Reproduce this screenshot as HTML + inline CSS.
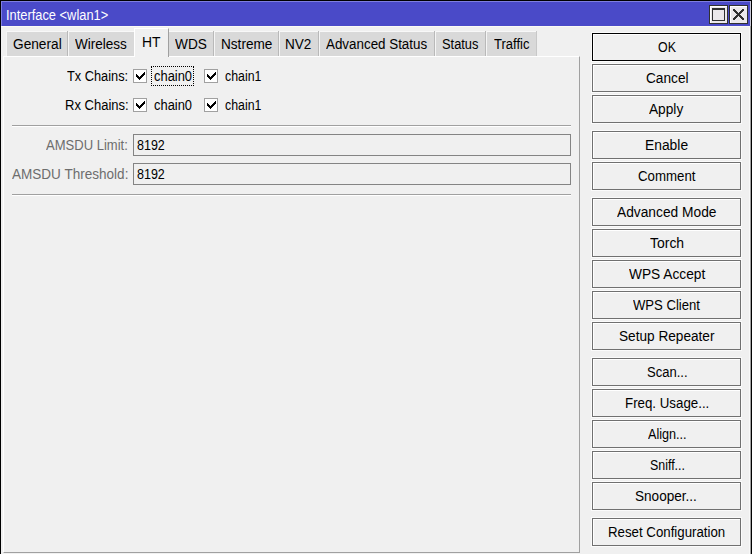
<!DOCTYPE html>
<html><head><meta charset="utf-8">
<style>
*{margin:0;padding:0;box-sizing:border-box}
html,body{width:752px;height:554px;overflow:hidden;background:#f0f0f0}
body{position:relative;font-family:"Liberation Sans",sans-serif;font-size:14px;color:#000}
.a{position:absolute}
.t{position:absolute;white-space:pre;line-height:15px;height:15px;transform-origin:0 0}
.tab{position:absolute;top:32px;height:24px;background:#d9d9d9}
.sep{position:absolute;top:31px;height:25px;width:1px;background:#b9b9b9}
.wl{position:absolute;top:31px;height:25px;width:1px;background:#f5f5f5}
.btn{position:absolute;left:592px;width:149px;height:28px;border:1px solid #707070;background:#f0f0f0;box-shadow:0 0 0 1px #fbfbfb}
.btn::before{content:"";position:absolute;left:0;top:0;right:0;bottom:0;border-left:1px solid #fff;border-top:1px solid #fff}
.def{border-color:#000}
.cb{position:absolute;width:14px;height:14px;border:1px solid #a0a0a0;background:#fff}
.fld{position:absolute;left:133px;width:438px;height:22px;border:1px solid #848484;background:#f0f0f0}
</style></head><body>
<div class="a" style="left:0;top:0;width:752px;height:1px;background:#000"></div>
<div class="a" style="left:0;top:0;width:1px;height:554px;background:#000"></div>
<div class="a" style="left:751px;top:0;width:1px;height:554px;background:#000"></div>
<div class="a" style="left:750px;top:26px;width:1px;height:528px;background:#a0a0a0"></div>
<div class="a" style="left:749px;top:27px;width:1px;height:527px;background:#f8f8f8"></div>
<div class="a" style="left:750px;top:1px;width:1px;height:25px;background:#c8c8d8"></div>
<div class="a" style="left:1px;top:1px;width:749px;height:25px;background:#4a4ac8"></div>
<div class="a" style="left:1px;top:1px;width:749px;height:1px;background:#7e7ee0"></div>
<div class="a" style="left:1px;top:1px;width:1px;height:25px;background:#7e7ee0"></div>
<div class="a" style="left:1px;top:26px;width:749px;height:1px;background:#fafaf4"></div>
<div class="a" style="left:709px;top:5px;width:19px;height:19px;background:#ebe8eb;border:1px solid #303030">
  <div class="a" style="left:0;top:0;width:17px;height:1px;background:#fff"></div>
  <div class="a" style="left:0;top:0;width:1px;height:17px;background:#fff"></div>
  <div class="a" style="left:2px;top:2px;width:13px;height:13px;border:1px solid #303030;border-top-width:2px"></div>
</div>
<div class="a" style="left:729px;top:5px;width:19px;height:19px;background:#ebe8eb;border:1px solid #303030">
  <div class="a" style="left:0;top:0;width:17px;height:1px;background:#fff"></div>
  <div class="a" style="left:0;top:0;width:1px;height:17px;background:#fff"></div>
  <svg class="a" style="left:0;top:0" width="17" height="17" viewBox="0 0 17 17" shape-rendering="crispEdges" fill="#303030"><rect x="3" y="3" width="2" height="2"/><rect x="12" y="3" width="2" height="2"/><rect x="4" y="4" width="2" height="2"/><rect x="11" y="4" width="2" height="2"/><rect x="5" y="5" width="2" height="2"/><rect x="10" y="5" width="2" height="2"/><rect x="6" y="6" width="2" height="2"/><rect x="9" y="6" width="2" height="2"/><rect x="7" y="7" width="2" height="2"/><rect x="8" y="7" width="2" height="2"/><rect x="8" y="8" width="2" height="2"/><rect x="7" y="8" width="2" height="2"/><rect x="9" y="9" width="2" height="2"/><rect x="6" y="9" width="2" height="2"/><rect x="10" y="10" width="2" height="2"/><rect x="5" y="10" width="2" height="2"/><rect x="11" y="11" width="2" height="2"/><rect x="4" y="11" width="2" height="2"/><rect x="12" y="12" width="2" height="2"/><rect x="3" y="12" width="2" height="2"/></svg>
</div>
<div class="a" style="left:6px;top:31px;width:530px;height:1px;background:#f8f8f8"></div>
<div class="wl" style="left:6px"></div><div class="tab" style="left:7px;width:60px"></div><div class="sep" style="left:67px"></div>
<div class="wl" style="left:68px"></div><div class="tab" style="left:69px;width:65px"></div>
<div class="tab" style="left:169px;width:44px"></div><div class="sep" style="left:213px"></div>
<div class="wl" style="left:214px"></div><div class="tab" style="left:215px;width:63px"></div><div class="sep" style="left:278px"></div>
<div class="wl" style="left:279px"></div><div class="tab" style="left:280px;width:38px"></div><div class="sep" style="left:318px"></div>
<div class="wl" style="left:319px"></div><div class="tab" style="left:320px;width:114px"></div><div class="sep" style="left:434px"></div>
<div class="wl" style="left:435px"></div><div class="tab" style="left:436px;width:49px"></div><div class="sep" style="left:485px"></div>
<div class="wl" style="left:486px"></div><div class="tab" style="left:487px;width:49px"></div><div class="sep" style="left:536px;background:#c8c8c8"></div>
<div class="a" style="left:3px;top:56px;width:577px;height:497px;background:#f0f0f0;border-left:1px solid #fff;border-top:1px solid #fff;border-right:1px solid #a0a0a0;border-bottom:1px solid #a0a0a0"></div>
<div class="a" style="left:134px;top:28px;width:35px;height:29px;background:#f0f0f0;border-left:1px solid #fff;border-top:1px solid #fff;border-right:1px solid #a0a0a0;border-bottom:0"></div>
<div class="cb" style="left:133px;top:69px"><svg class="a" style="left:0;top:0" width="12" height="12" viewBox="0 0 12 12" shape-rendering="crispEdges" fill="#000"><rect x="2" y="4" width="1" height="3"/><rect x="3" y="5" width="1" height="3"/><rect x="4" y="6" width="1" height="3"/><rect x="5" y="7" width="1" height="3"/><rect x="6" y="6" width="1" height="3"/><rect x="7" y="5" width="1" height="3"/><rect x="8" y="4" width="1" height="3"/><rect x="9" y="3" width="1" height="3"/><rect x="10" y="2" width="1" height="3"/></svg></div>
<div class="cb" style="left:204px;top:69px"><svg class="a" style="left:0;top:0" width="12" height="12" viewBox="0 0 12 12" shape-rendering="crispEdges" fill="#000"><rect x="2" y="4" width="1" height="3"/><rect x="3" y="5" width="1" height="3"/><rect x="4" y="6" width="1" height="3"/><rect x="5" y="7" width="1" height="3"/><rect x="6" y="6" width="1" height="3"/><rect x="7" y="5" width="1" height="3"/><rect x="8" y="4" width="1" height="3"/><rect x="9" y="3" width="1" height="3"/><rect x="10" y="2" width="1" height="3"/></svg></div>
<div class="cb" style="left:133px;top:98px"><svg class="a" style="left:0;top:0" width="12" height="12" viewBox="0 0 12 12" shape-rendering="crispEdges" fill="#000"><rect x="2" y="4" width="1" height="3"/><rect x="3" y="5" width="1" height="3"/><rect x="4" y="6" width="1" height="3"/><rect x="5" y="7" width="1" height="3"/><rect x="6" y="6" width="1" height="3"/><rect x="7" y="5" width="1" height="3"/><rect x="8" y="4" width="1" height="3"/><rect x="9" y="3" width="1" height="3"/><rect x="10" y="2" width="1" height="3"/></svg></div>
<div class="cb" style="left:204px;top:98px"><svg class="a" style="left:0;top:0" width="12" height="12" viewBox="0 0 12 12" shape-rendering="crispEdges" fill="#000"><rect x="2" y="4" width="1" height="3"/><rect x="3" y="5" width="1" height="3"/><rect x="4" y="6" width="1" height="3"/><rect x="5" y="7" width="1" height="3"/><rect x="6" y="6" width="1" height="3"/><rect x="7" y="5" width="1" height="3"/><rect x="8" y="4" width="1" height="3"/><rect x="9" y="3" width="1" height="3"/><rect x="10" y="2" width="1" height="3"/></svg></div>
<div class="a" style="left:151px;top:66px;width:43px;height:20px;border:1px dotted #000"></div>
<div class="a" style="left:12px;top:125px;width:559px;height:1px;background:#a0a0a0"></div>
<div class="a" style="left:12px;top:126px;width:559px;height:1px;background:#fff"></div>
<div class="fld" style="top:134px"></div>
<div class="fld" style="top:163px"></div>
<div class="a" style="left:12px;top:194px;width:559px;height:1px;background:#a0a0a0"></div>
<div class="a" style="left:12px;top:195px;width:559px;height:1px;background:#fff"></div>
<div class="btn def" style="top:33px"></div>
<div class="btn" style="top:64px"></div>
<div class="btn" style="top:95px"></div>
<div class="btn" style="top:131px"></div>
<div class="btn" style="top:162px"></div>
<div class="btn" style="top:198px"></div>
<div class="btn" style="top:229px"></div>
<div class="btn" style="top:260px"></div>
<div class="btn" style="top:291px"></div>
<div class="btn" style="top:322px"></div>
<div class="btn" style="top:358px"></div>
<div class="btn" style="top:389px"></div>
<div class="btn" style="top:420px"></div>
<div class="btn" style="top:451px"></div>
<div class="btn" style="top:482px"></div>
<div class="btn" style="top:518px"></div>
<div class="t" style="left:5.78px;top:8px;color:#fff;transform:scaleX(0.9182)">Interface &lt;wlan1&gt;</div>
<div class="t" style="left:13.02px;top:37px;color:#000;transform:scaleX(0.9771)">General</div>
<div class="t" style="left:75.00px;top:37px;color:#000;transform:scaleX(0.9667)">Wireless</div>
<div class="t" style="left:141.51px;top:35px;color:#000;transform:scaleX(0.9889)">HT</div>
<div class="t" style="left:175.20px;top:37px;color:#000;transform:scaleX(0.9750)">WDS</div>
<div class="t" style="left:220.53px;top:37px;color:#000;transform:scaleX(0.9706)">Nstreme</div>
<div class="t" style="left:285.43px;top:37px;color:#000;transform:scaleX(0.9692)">NV2</div>
<div class="t" style="left:325.90px;top:37px;color:#000;transform:scaleX(0.9557)">Advanced Status</div>
<div class="t" style="left:441.58px;top:37px;color:#000;transform:scaleX(0.9179)">Status</div>
<div class="t" style="left:493.90px;top:37px;color:#000;transform:scaleX(0.9289)">Traffic</div>
<div class="t" style="left:66.90px;top:69px;color:#000;transform:scaleX(0.9136)">Tx Chains:</div>
<div class="t" style="left:64.92px;top:98px;color:#000;transform:scaleX(0.9295)">Rx Chains:</div>
<div class="t" style="left:46.20px;top:138px;color:#6d6d6d;transform:scaleX(0.9310)">AMSDU Limit:</div>
<div class="t" style="left:12.10px;top:167px;color:#6d6d6d;transform:scaleX(0.9672)">AMSDU Threshold:</div>
<div class="t" style="left:153.70px;top:69px;color:#000;transform:scaleX(0.9220)">chain0</div>
<div class="t" style="left:224.80px;top:69px;color:#000;transform:scaleX(0.8829)">chain1</div>
<div class="t" style="left:153.70px;top:98px;color:#000;transform:scaleX(0.9220)">chain0</div>
<div class="t" style="left:224.80px;top:98px;color:#000;transform:scaleX(0.8829)">chain1</div>
<div class="t" style="left:137.10px;top:138px;color:#000;transform:scaleX(0.8935)">8192</div>
<div class="t" style="left:137.10px;top:167px;color:#000;transform:scaleX(0.8935)">8192</div>
<div class="t" style="left:658.40px;top:40px;color:#000;transform:scaleX(0.8850)">OK</div>
<div class="t" style="left:645.52px;top:71px;color:#000;transform:scaleX(0.9762)">Cancel</div>
<div class="t" style="left:649.40px;top:102px;color:#000;transform:scaleX(0.9771)">Apply</div>
<div class="t" style="left:644.61px;top:138px;color:#000;transform:scaleX(0.9881)">Enable</div>
<div class="t" style="left:637.55px;top:169px;color:#000;transform:scaleX(0.9467)">Comment</div>
<div class="t" style="left:617.10px;top:205px;color:#000;transform:scaleX(0.9832)">Advanced Mode</div>
<div class="t" style="left:649.90px;top:236px;color:#000;transform:scaleX(0.9971)">Torch</div>
<div class="t" style="left:629.40px;top:267px;color:#000;transform:scaleX(0.9795)">WPS Accept</div>
<div class="t" style="left:633.10px;top:298px;color:#000;transform:scaleX(0.9361)">WPS Client</div>
<div class="t" style="left:618.53px;top:329px;color:#000;transform:scaleX(0.9732)">Setup Repeater</div>
<div class="t" style="left:646.57px;top:365px;color:#000;transform:scaleX(0.9310)">Scan...</div>
<div class="t" style="left:624.75px;top:396px;color:#000;transform:scaleX(0.9506)">Freq. Usage...</div>
<div class="t" style="left:647.50px;top:427px;color:#000;transform:scaleX(0.9000)">Align...</div>
<div class="t" style="left:649.71px;top:458px;color:#000;transform:scaleX(0.8865)">Sniff...</div>
<div class="t" style="left:635.33px;top:489px;color:#000;transform:scaleX(0.9694)">Snooper...</div>
<div class="t" style="left:608.05px;top:525px;color:#000;transform:scaleX(0.9475)">Reset Configuration</div>
</body></html>
